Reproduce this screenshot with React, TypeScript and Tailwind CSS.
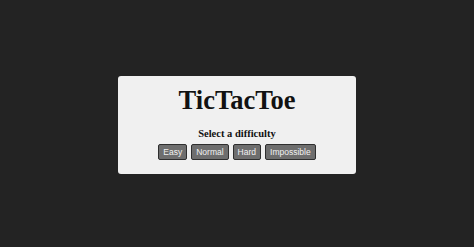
export default function App() {
  const levels = ["Easy", "Normal", "Hard", "Impossible"];

  return (
    <div className="flex h-screen w-full items-center justify-center bg-[#232323] pt-[3px]">
      <div className="flex w-[238px] flex-col items-center rounded-[3px] bg-[#f0f0f0] pt-[11px] pb-[14px] text-[#111]">
        <h1 className="font-['Liberation_Serif',serif] text-[26.5px] leading-[26px] font-bold">TicTacToe</h1>
        <h3 className="mt-[15px] font-['Liberation_Serif',serif] text-[10.5px] leading-[12px] font-bold">
          Select a difficulty
        </h3>
        <div className="mt-[4px] flex gap-[4px]">
          {levels.map((level) => (
            <button
              key={level}
              className="h-[16px] rounded-[2px] border border-[#2e2e2e] bg-[#6e6e6e] px-[4px] font-['Liberation_Sans',sans-serif] text-[8.5px] leading-[14px] text-[#f2f2f2]"
            >
              {level}
            </button>
          ))}
        </div>
      </div>
    </div>
  );
}
